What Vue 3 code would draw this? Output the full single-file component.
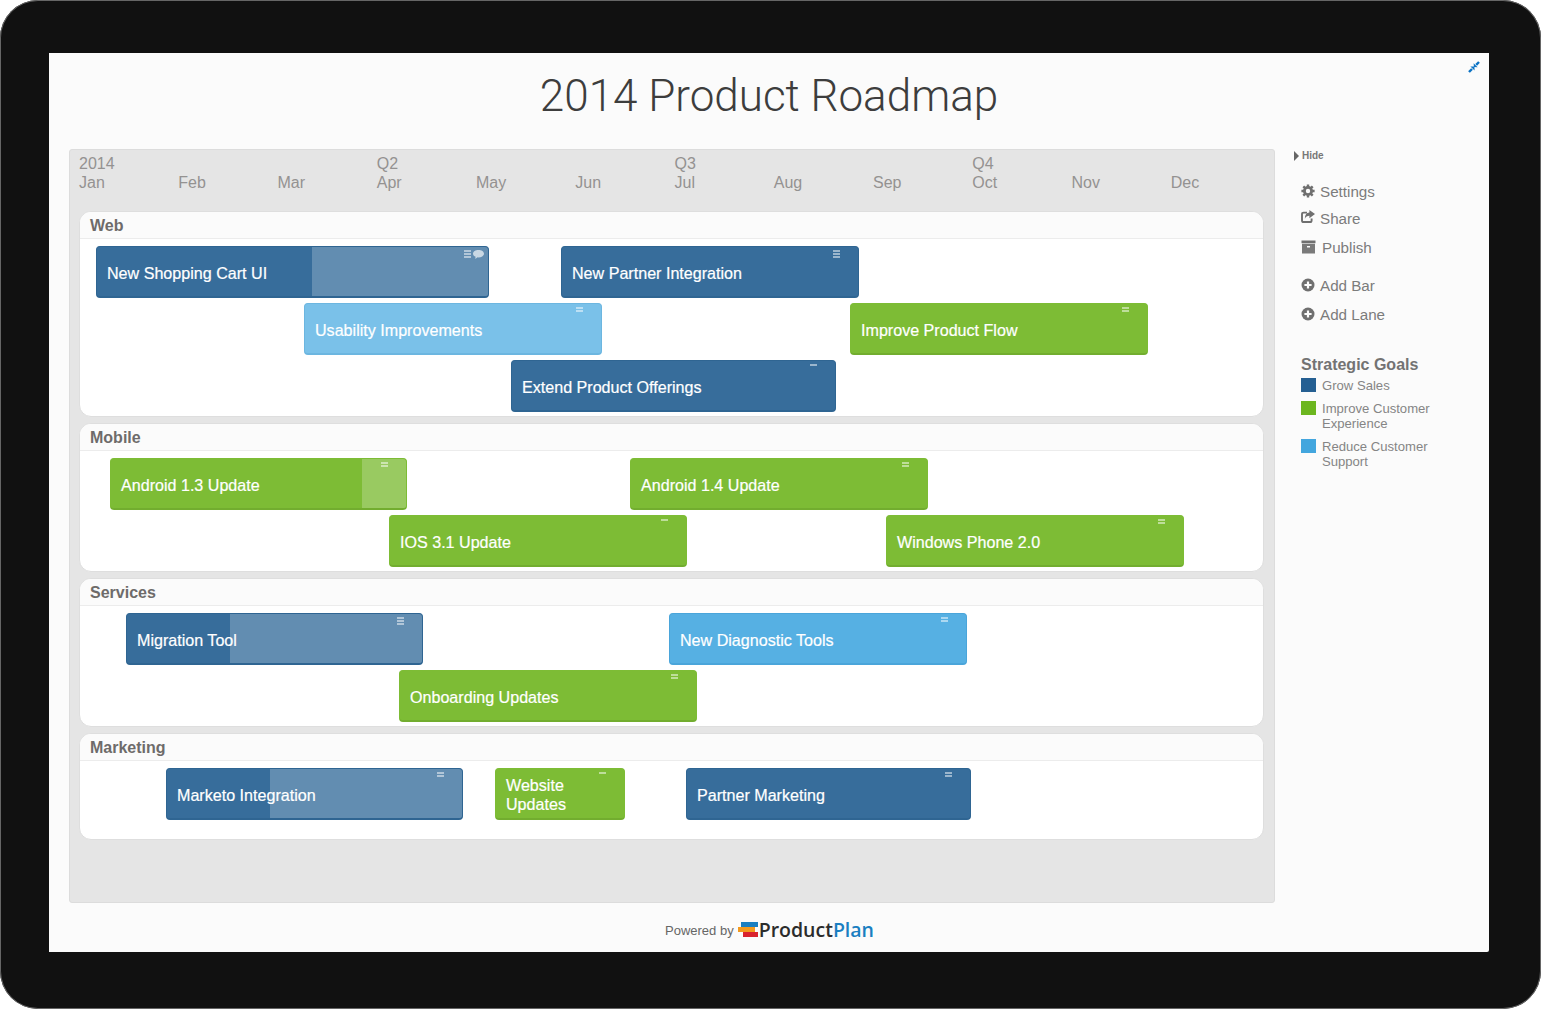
<template>
  <div class="device">
    <div class="screen">
      <svg class="collapse" viewBox="0 0 12 12" width="12" height="12">
        <path d="M1 11L4 8" stroke="#0a72c4" stroke-width="2.4" />
        <path d="M2.4 5.4L6.4 5.6 6.6 9.6Z" fill="#0a72c4" />
        <path d="M11 1L8.2 3.8" stroke="#0a72c4" stroke-width="2.4" />
        <path d="M9.6 6.2L5.9 5.9 5.6 2.2Z" fill="#0a72c4" />
      </svg>
      <h1 class="title">2014 Product Roadmap</h1>

      <div class="main">
        <div class="board">
          <div class="months">
            <div v-for="m in months" :key="m.name" class="month">
              <div class="quarter">{{ m.quarter }}</div>
              <div>{{ m.name }}</div>
            </div>
          </div>

          <div class="lanes">
            <section v-for="lane in lanes" :key="lane.name" class="lane">
              <div class="lane-name">{{ lane.name }}</div>
              <div class="lane-body" :class="{ roomy: lane.roomy }">
                <div v-for="(row, i) in lane.rows" :key="i" class="row">
                  <div
                    v-for="bar in row"
                    :key="bar.text"
                    class="bar"
                    :class="bar.color"
                    :style="barStyle(bar)"
                  >
                    <div v-if="bar.done" class="bar-rest" :style="{ left: bar.done + 'px' }"></div>
                    <span class="bar-text">{{ bar.text }}</span>
                    <span class="bar-icons">
                      <span class="lines">
                        <i v-for="n in bar.lines" :key="n"></i>
                      </span>
                      <svg v-if="bar.comment" viewBox="0 0 11 9" width="11" height="9">
                        <path d="M5.5 0C8.5 0 11 1.6 11 3.7S8.5 7.4 5.5 7.4L4.6 7.3C3.8 8.2 2.8 8.7 1.8 8.8 2.4 8.2 2.6 7.5 2.6 6.8 1 6.2 0 5 0 3.7 0 1.6 2.5 0 5.5 0Z" fill="#c9d8e4" />
                      </svg>
                    </span>
                  </div>
                </div>
              </div>
            </section>
          </div>
        </div>

        <aside class="side">
          <div class="hide"><span class="tri"></span>Hide</div>

          <ul class="actions first">
            <li class="settings">
              <svg viewBox="0 0 14 14" width="14" height="14">
                <circle cx="7" cy="7" r="3.6" fill="none" stroke="#6f6f6f" stroke-width="2.8" />
                <path d="M7 0.4V13.6M0.4 7H13.6M2.3 2.3L11.7 11.7M11.7 2.3L2.3 11.7" stroke="#6f6f6f" stroke-width="2.4" stroke-dasharray="2.6 8.2" fill="none" />
              </svg>
              Settings
            </li>
            <li class="share">
              <svg viewBox="0 0 14 13" width="14" height="13">
                <path d="M6 2.6H2.6C1.6 2.6 1 3.2 1 4.2V10.4C1 11.4 1.6 12 2.6 12H9C10 12 10.6 11.4 10.6 10.4V8.4" fill="none" stroke="#6f6f6f" stroke-width="1.9" />
                <path d="M8.4 0L14 4.1 8.4 8.2V5.8C6.2 5.8 4.8 6.6 3.9 8.8 3.9 5 5.5 2.6 8.4 2.4Z" fill="#6f6f6f" />
              </svg>
              Share
            </li>
            <li class="publish">
              <svg viewBox="0 0 15 14" width="15" height="14">
                <path d="M0.5 0.5H14.5V3.2H0.5Z" fill="#6f6f6f" />
                <path d="M1 3.8H14V13.5H1ZM6 6V7.4H9V6Z" fill="#7a7a7a" fill-rule="evenodd" />
              </svg>
              Publish
            </li>
          </ul>

          <ul class="actions">
            <li v-for="a in ['Add Bar', 'Add Lane']" :key="a" class="add">
              <svg viewBox="0 0 14 14" width="14" height="14">
                <circle cx="7" cy="7" r="6.5" fill="#6f6f6f" />
                <path d="M7 3.4V10.6M3.4 7H10.6" stroke="#fbfbfb" stroke-width="2.2" />
              </svg>
              {{ a }}
            </li>
          </ul>

          <h3 class="goals-title">Strategic Goals</h3>
          <ul class="goals">
            <li v-for="g in goals" :key="g.label">
              <span class="swatch" :style="{ background: g.color }"></span>
              <span class="goal-label">{{ g.label }}</span>
            </li>
          </ul>
        </aside>
      </div>

      <footer class="footer">
        <span class="powered">Powered by</span>
        <svg class="logo" viewBox="0 0 20 16" width="20" height="16">
          <rect x="3" y="0" width="17" height="5" fill="#1a7fc1" />
          <rect x="0" y="5" width="17" height="5" fill="#f39a1e" />
          <rect x="5" y="10" width="15" height="5" fill="#d9232e" />
        </svg>
        <span class="brand">Product<b>Plan</b></span>
      </footer>
    </div>
  </div>
</template>

<script setup>
const quarters = { Jan: '2014', Apr: 'Q2', Jul: 'Q3', Oct: 'Q4' }
const months = ['Jan', 'Feb', 'Mar', 'Apr', 'May', 'Jun', 'Jul', 'Aug', 'Sep', 'Oct', 'Nov', 'Dec'].map((name) => ({
  name,
  quarter: quarters[name] || ''
}))

// x and end are page positions along the timeline, the lane's inside starts at 80
const LANE_X = 80

const lanes = [
  {
    name: 'Web',
    rows: [
      [
        { text: 'New Shopping Cart UI', x: 96, end: 489, color: 'blue', done: 215, lines: 3, comment: true },
        { text: 'New Partner Integration', x: 561, end: 859, color: 'blue', lines: 3 }
      ],
      [
        { text: 'Usability Improvements', x: 304, end: 602, color: 'pale', lines: 2 },
        { text: 'Improve Product Flow', x: 850, end: 1148, color: 'green', lines: 2 }
      ],
      [{ text: 'Extend Product Offerings', x: 511, end: 836, color: 'blue', lines: 1 }]
    ]
  },
  {
    name: 'Mobile',
    rows: [
      [
        { text: 'Android 1.3 Update', x: 110, end: 407, color: 'green', done: 251, lines: 2 },
        { text: 'Android 1.4 Update', x: 630, end: 928, color: 'green', lines: 2 }
      ],
      [
        { text: 'IOS 3.1 Update', x: 389, end: 687, color: 'green', lines: 1 },
        { text: 'Windows Phone 2.0', x: 886, end: 1184, color: 'green', lines: 2 }
      ]
    ]
  },
  {
    name: 'Services',
    rows: [
      [
        { text: 'Migration Tool', x: 126, end: 423, color: 'blue', done: 103, lines: 3 },
        { text: 'New Diagnostic Tools', x: 669, end: 967, color: 'sky', lines: 2 }
      ],
      [{ text: 'Onboarding Updates', x: 399, end: 697, color: 'green', lines: 2 }]
    ]
  },
  {
    name: 'Marketing',
    roomy: true,
    rows: [
      [
        { text: 'Marketo Integration', x: 166, end: 463, color: 'blue', done: 103, lines: 2 },
        { text: 'Website Updates', x: 495, end: 625, color: 'green', lines: 1 },
        { text: 'Partner Marketing', x: 686, end: 971, color: 'blue', lines: 2 }
      ]
    ]
  }
]

const goals = [
  { label: 'Grow Sales', color: '#255f92' },
  { label: 'Improve Customer Experience', color: '#6cb61f' },
  { label: 'Reduce Customer Support', color: '#43a6de' }
]

const barStyle = (bar) => ({
  left: bar.x - LANE_X + 'px',
  width: bar.end - bar.x + 'px'
})
</script>

<style>
html,
body {
  background: #fff;
}
</style>

<style scoped>
.device {
  box-sizing: border-box;
  width: 1541px;
  height: 1009px;
  padding: 53px 52px 57px 49px;
  background: #111;
  border-radius: 38px;
  box-shadow: inset 0 0 0 1px #666;
  font-family: "Liberation Sans", Arial, sans-serif;
}

.screen {
  position: relative;
  display: flex;
  flex-direction: column;
  height: 899px;
  background: #fbfbfb;
  border-bottom-right-radius: 2px;
}

.collapse {
  position: absolute;
  top: 8px;
  right: 9px;
}

.title {
  margin: 0;
  height: 96px;
  text-align: center;
  font-family: Roboto, "Liberation Sans", sans-serif;
  font-size: 44px;
  font-weight: 300;
  line-height: 86px;
  color: #3d3d3d;
}

.main {
  display: flex;
  height: 754px;
  padding-left: 20px;
}

.board {
  box-sizing: border-box;
  width: 1206px;
  background: #e5e5e5;
  border: 1px solid #dcdcdc;
  border-radius: 3px;
}

.months {
  display: grid;
  grid-template-columns: repeat(12, 99.25px);
  height: 56px;
  padding: 5px 0 0 9px;
  font-size: 16px;
  line-height: 18px;
  color: #949291;
}

.quarter {
  height: 19px;
}

.lanes {
  display: flex;
  flex-direction: column;
  gap: 6px;
  padding: 0 10px 0 9px;
}

.lane {
  border: 1px solid #dedede;
  border-radius: 12px;
  overflow: hidden;
  background: #fff;
}

.lane-name {
  height: 26px;
  padding-left: 10px;
  background: #fbfbfb;
  border-bottom: 1px solid #ececec;
  font-size: 16px;
  font-weight: 700;
  line-height: 27px;
  color: #6e6b6a;
}

.lane-body {
  display: flex;
  flex-direction: column;
  gap: 6px;
  padding: 7px 0 5px;
}

.lane-body.roomy {
  padding-bottom: 20px;
}

.row {
  position: relative;
  height: 51px;
}

.bar {
  position: absolute;
  top: 0;
  box-sizing: border-box;
  display: flex;
  align-items: center;
  height: 52px;
  padding: 3px 10px 0;
  border: 1px solid transparent;
  border-bottom-width: 2px;
  border-radius: 4px;
  overflow: hidden;
  color: #fff;
  font-size: 16.1px;
  line-height: 19px;
}

.bar.blue {
  background: #376d9b;
  border-color: #2f6592;
}

.bar.pale {
  background: #7ac1e9;
  border-color: #6cb6e0;
}

.bar.sky {
  background: #56b0e3;
  border-color: #4aa5da;
}

.bar.green {
  background: #7dbc35;
  border-color: #7dbc35 #7dbc35 #72ad2f;
}

.bar-rest {
  position: absolute;
  top: 0;
  right: 0;
  bottom: 0;
  background: rgba(255, 255, 255, 0.22);
}

.bar-text {
  position: relative;
  -webkit-text-stroke: 0.2px #fff;
}

.bar-icons {
  position: absolute;
  top: 3px;
  right: 18px;
  display: flex;
  align-items: flex-start;
  gap: 2px;
}

.bar:has(svg) .bar-icons {
  right: 4px;
}

.lines {
  display: flex;
  flex-direction: column;
  gap: 1px;
  width: 7px;
}

.lines i {
  display: block;
  height: 2px;
  background: rgba(255, 255, 255, 0.5);
}

.side {
  flex: 1;
  padding-left: 26px;
  color: #7c7c7c;
}

.hide {
  display: flex;
  align-items: center;
  gap: 3px;
  margin: 1px 0 0 -7px;
  height: 11px;
  font-size: 10px;
  font-weight: 700;
  line-height: 11px;
  color: #777;
}

.tri {
  width: 0;
  height: 0;
  border-top: 5px solid transparent;
  border-bottom: 5px solid transparent;
  border-left: 5px solid #666;
}

.actions {
  margin: 18px 0 0;
  padding: 0;
  list-style: none;
  font-size: 15.2px;
}

.actions.first {
  margin-top: 20px;
}

.actions li {
  display: flex;
  align-items: center;
  height: 20px;
}

.settings svg,
.add svg {
  margin-right: 5px;
}

.share {
  margin-top: 7px;
}

.share svg {
  margin: -4px 5px 0 0;
}

.publish {
  margin-top: 9px;
}

.publish svg {
  margin-right: 6px;
}

.add {
  margin-top: 9px;
}

.goals-title {
  margin: 31px 0 0;
  font-size: 16px;
  font-weight: 700;
  line-height: 20px;
  color: #737373;
}

.goals {
  margin: 3px 0 0;
  padding: 0;
  list-style: none;
}

.goals li {
  display: flex;
  gap: 6px;
  margin-bottom: 8px;
  font-size: 13.1px;
  line-height: 15px;
  color: #858585;
}

.swatch {
  flex: none;
  width: 15px;
  height: 14px;
}

.goal-label {
  width: 115px;
}

.footer {
  display: flex;
  align-items: center;
  justify-content: center;
  height: 47px;
  padding: 2px 0 0 1px;
}

.powered {
  margin-right: 4px;
  padding-top: 3px;
  font-size: 13px;
  color: #666;
}

.logo {
  margin-top: 2px;
}

.brand {
  margin: 2px 0 0 1px;
  font-family: "Open Sans", sans-serif;
  font-size: 19.5px;
  font-weight: 600;
  line-height: 24px;
  color: #2c2c2c;
}

.brand b {
  font-weight: 600;
  color: #1a7fc1;
}
</style>
